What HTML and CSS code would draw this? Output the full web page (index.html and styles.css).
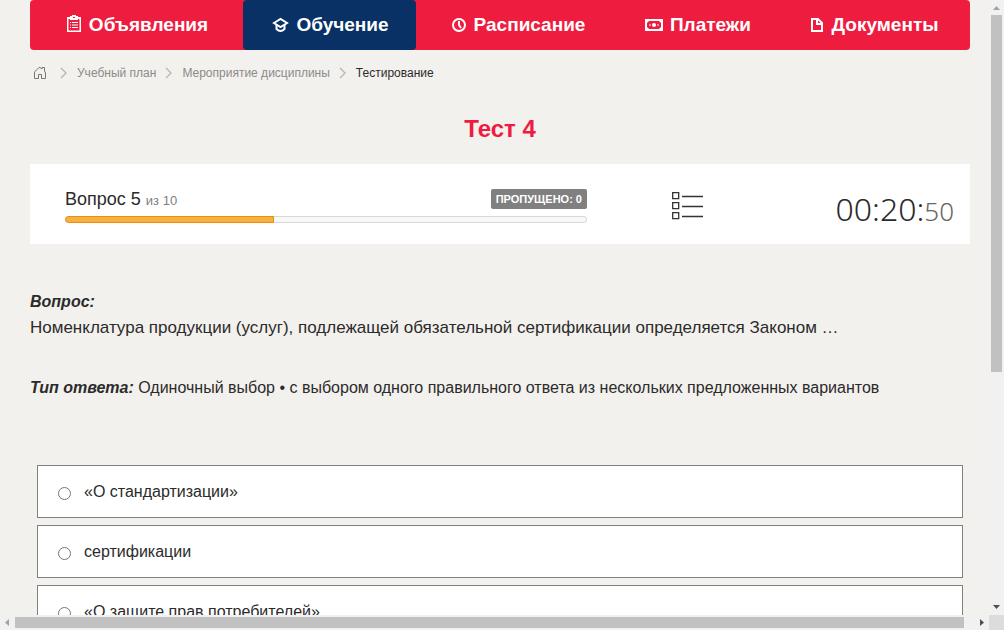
FILE: index.html
```html
<!DOCTYPE html>
<html lang="ru">
<head>
<meta charset="utf-8">
<meta name="viewport" content="width=device-width, initial-scale=1">
<title>Тест 4</title>
<link rel="stylesheet" href="styles.css">
</head>
<body>
<div class="window">
  <div class="viewport">
    <nav class="menu">
      <a class="menu-item" href="#">
        <svg width="15" height="20" viewBox="0 0 15 20"><path fill="#fff" fill-rule="evenodd" d="M0 2h3V1h2V0h4v1h2v1h3v15H0zM1.500 4v11.500h11V4H11v1H3V4zM6 2v1h2V2z"/><path d="M3 7.500h1M5 7.500h6M3 10h1M5 10h6M3 12.500h1M5 12.500h6" stroke="#fff"/></svg>
        <span>Объявления</span>
      </a>
      <a class="menu-item menu-item-active" href="#">
        <svg width="17" height="16" viewBox="0 0 17 16" fill="none" stroke="#fff" stroke-width="2"><path d="M2 6l6.500-4L15 6l-6.500 4z"/><path d="M4.500 8v4q4 4 8 0V8"/></svg>
        <span>Обучение</span>
      </a>
      <a class="menu-item" href="#">
        <svg width="16" height="16" viewBox="0 0 16 16" fill="none" stroke="#fff" stroke-width="2"><circle cx="8" cy="8" r="6"/><path d="M8 4v4l2 3"/></svg>
        <span>Расписание</span>
      </a>
      <a class="menu-item" href="#">
        <svg width="18" height="12" viewBox="0 0 18 12" fill="none" stroke="#fff" stroke-width="2"><path d="M1 1h16v10H1z"/><path d="M2 2h2L2 4zM16 2h-2l2 2zM2 10h2L2 8zM16 10h-2l2-2z" fill="#fff" stroke="none"/><circle cx="9" cy="6" r="2" fill="#fff" stroke="none"/><path d="M4 6h2M12 6h2" stroke-width="1"/></svg>
        <span>Платежи</span>
      </a>
      <a class="menu-item" href="#">
        <svg width="15" height="16" viewBox="0 0 15 16" fill="none" stroke="#fff" stroke-width="2"><path d="M2 2h6l4 4v8H2z"/><path d="M7 2v5h5"/></svg>
        <span>Документы</span>
      </a>
    </nav>

    <nav class="crumbs" aria-label="Навигация">
      <a href="#" class="crumb-home" aria-label="Главная"><svg width="14" height="14" viewBox="0 0 14 14" fill="none" stroke="#777"><path d="M1.500 12.500V6L6 1.500h1l2 1.500V1.500h2.500V5l1 2v5.500h-4v-4h-3v4z"/></svg></a>
      <svg class="crumb-sep" width="8" height="12" viewBox="0 0 8 12"><path d="M1 1l5 5-5 5"/></svg>
      <a href="#">Учебный план</a>
      <svg class="crumb-sep" width="8" height="12" viewBox="0 0 8 12"><path d="M1 1l5 5-5 5"/></svg>
      <a href="#">Мероприятие дисциплины</a>
      <svg class="crumb-sep" width="8" height="12" viewBox="0 0 8 12"><path d="M1 1l5 5-5 5"/></svg>
      <span class="crumb-current">Тестирование</span>
    </nav>

    <h1 class="title">Тест 4</h1>

    <section class="status">
      <div class="progress">
        <div class="progress-head">
          <div class="progress-label">Вопрос 5 <small>из 10</small></div>
          <span class="badge">ПРОПУЩЕНО: 0</span>
        </div>
        <div class="track"><div class="track-fill" style="width: 40%"></div></div>
      </div>
      <button class="list-button" type="button" aria-label="Список вопросов"><svg width="31" height="28" viewBox="0 0 31 28" fill="none" stroke="#333" stroke-width="1.300"><path d="M.7.700h6v6h-6zM.7 10.700h6v6h-6zM.7 20.700h6v6h-6z"/><path d="M10 4.500h21M10 14.500h21M10 24.500h21"/></svg></button>
      <div class="timer">00:20:<small>50</small></div>
    </section>

    <form class="question">
      <h2 class="caption">Вопрос:</h2>
      <p class="question-text">Номенклатура продукции (услуг), подлежащей обязательной сертификации определяется Законом …</p>
      <p class="answer-type"><b class="caption">Тип ответа:</b> Одиночный выбор • с выбором одного правильного ответа из нескольких предложенных вариантов</p>
      <div class="answers">
        <label class="answer"><input type="radio" name="answer"><span>«О стандартизации»</span></label>
        <label class="answer"><input type="radio" name="answer"><span>сертификации</span></label>
        <label class="answer"><input type="radio" name="answer"><span>«О защите прав потребителей»</span></label>
      </div>
    </form>
  </div>

  <div class="bar bar-vertical">
    <svg width="15" height="15" viewBox="0 0 15 15"><path d="M4 10h7L7.500 6z" fill="#a3a3a3"/></svg>
    <div class="bar-lane"><div class="bar-thumb"></div></div>
    <svg width="15" height="15" viewBox="0 0 15 15"><path d="M4 5h7L7.500 9z" fill="#505050"/></svg>
  </div>
  <div class="bar bar-horizontal">
    <svg width="15" height="15" viewBox="0 0 15 15"><path d="M9 4v7L5 7.500z" fill="#a3a3a3"/></svg>
    <div class="bar-lane"><div class="bar-thumb"></div></div>
    <svg width="15" height="15" viewBox="0 0 15 15"><path d="M6 4v7l4-3.500z" fill="#505050"/></svg>
  </div>
  <div class="bar-corner"></div>
</div>
</body>
</html>
```
FILE: styles.css
```css
* {
  box-sizing: border-box;
}

body {
  margin: 0;
  background: #f3f1ed;
  color: #2b2b2b;
  font-family: "Liberation Sans", Arial, sans-serif;
  font-size: 16px;
  line-height: 20px;
}

a {
  color: inherit;
  text-decoration: none;
}

svg {
  flex: none;
}

.window {
  display: grid;
  grid-template: minmax(0, 1fr) 15px / minmax(0, 1fr) 15px;
  height: 100vh;
}

.viewport {
  overflow: hidden;
  padding: 0 19px 0 30px;
}

.menu {
  display: grid;
  grid-template-columns: 213fr 173fr 202fr 158fr 194fr;
  border-radius: 4px;
  background: #ee1c3e;
  color: #fff;
  font-size: 19px;
  font-weight: bold;
}

.menu-item {
  display: flex;
  align-items: center;
  justify-content: center;
  gap: 7px;
  height: 50px;
  padding-left: 2px;
  border-radius: 4px;
}

.menu-item-active {
  background: #093166;
}

.crumbs {
  display: flex;
  align-items: center;
  gap: 9px;
  padding: 13px 3px;
  color: #8b8b8b;
  font-size: 12px;
}

.crumb-home {
  display: flex;
  margin-right: 4px;
}

.crumb-sep {
  fill: none;
  stroke: #b5b5b5;
  stroke-width: 1.3;
}

.crumb-current {
  color: #2b2b2b;
}

.title {
  margin: 18px 0 21px;
  color: #ee1c3e;
  font-size: 24px;
  line-height: 29px;
  text-align: center;
}

.status {
  display: grid;
  grid-template-columns: 557fr 201fr 182fr;
  height: 80px;
  background: #fff;
}

.progress {
  padding: 25px 0 0 35px;
}

.progress-head {
  display: flex;
  align-items: flex-start;
  justify-content: space-between;
}

.progress-label {
  font-size: 18px;
}

.progress-label small {
  color: #808080;
  font-size: 13px;
}

.badge {
  padding: 0 5px;
  border-radius: 2px;
  background: #808080;
  color: #fff;
  font-size: 11px;
  font-weight: bold;
}

.track {
  height: 7px;
  margin-top: 5px;
  border-radius: 4px;
  background: #f8f8f8;
  box-shadow: inset 0 0 0 1px #d9d9d9;
  overflow: hidden;
}

.track-fill {
  height: 7px;
  border: 1px solid #e78f08;
  border-radius: 4px 0 0 4px;
  background: #f8b043;
}

.list-button {
  display: flex;
  place-self: center;
  margin-top: 4px;
  padding: 0;
  border: 0;
  background: none;
}

.timer {
  padding: 25px 16px 0 0;
  color: #2b2b2b;
  font-family: "Noto Sans", "Open Sans", sans-serif;
  font-size: 32px;
  font-weight: 300;
  line-height: 40px;
  text-align: right;
}

.timer small {
  color: #666;
  font-size: 26px;
}

.question {
  padding-top: 48px;
}

.caption {
  margin: 0;
  font-size: 16px;
  font-style: italic;
}

.question-text {
  margin: 6px 0 40px;
  font-size: 17px;
}

.answer-type {
  margin: 0 0 67px;
}

.answers {
  display: grid;
  gap: 7px;
  padding: 0 7px;
}

.answer {
  display: flex;
  align-items: center;
  gap: 13px;
  height: 53px;
  padding: 0 20px;
  border: 1px solid #808080;
  background: #fff;
}

.answer input {
  width: 13px;
  height: 13px;
  margin: 4px 0 0;
}

.bar {
  display: flex;
  background: #f1f1f1;
}

.bar-vertical {
  flex-direction: column;
}

.bar-lane {
  display: flex;
  flex: 1;
}

.bar-thumb {
  background: #c1c1c1;
}

.bar-vertical .bar-thumb {
  width: 11px;
  height: 61%;
  margin: 0 2px;
}

.bar-horizontal .bar-thumb {
  width: 99%;
  height: 11px;
  margin: 2px 0;
}

.bar-corner {
  background: #dcdcdc;
}
```
